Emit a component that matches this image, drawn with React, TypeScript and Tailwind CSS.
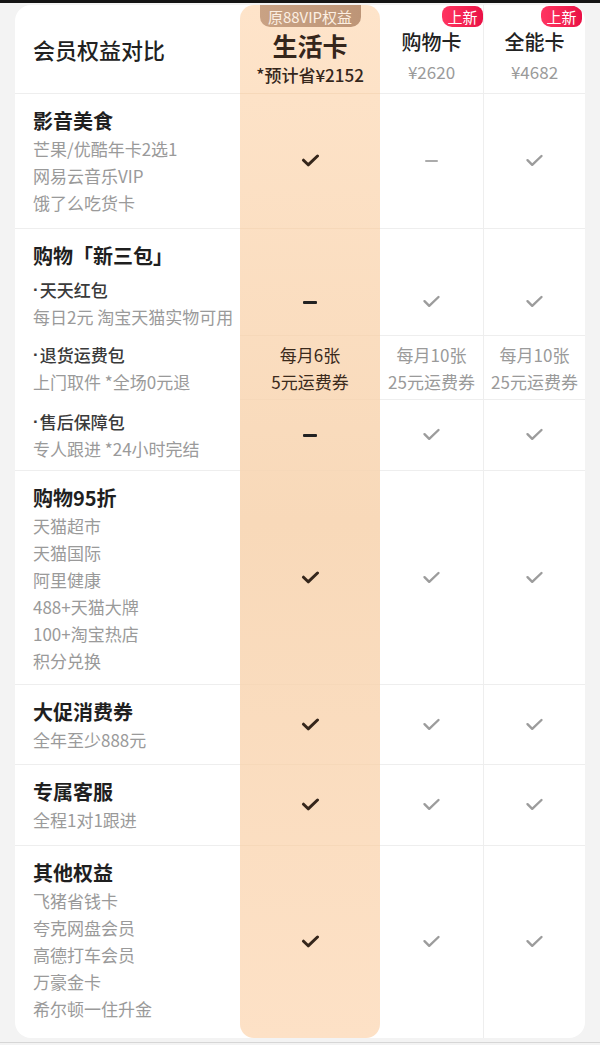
import React from "react";

type V = "check" | "dash" | "empty" | "text";

type Row = {
  h: string;
  left: React.ReactNode;
  leftBorder: boolean;
  valBorder: boolean;
  vals: { kind: V; lines?: string[] }[];
};

const FONT = {
  fontFamily:
    '"Noto Sans CJK SC", "Noto Sans", "Liberation Sans", sans-serif',
};

function Check({ dark }: { dark?: boolean }) {
  return (
    <svg width="19" height="14" viewBox="0 0 19 14" fill="none">
      <path
        d="M2.5 6.2 L7.2 10.8 L16.5 2"
        stroke={dark ? "#35261b" : "#9c9c9c"}
        strokeWidth={dark ? 3 : 2.4}
        strokeLinecap="round"
        strokeLinejoin="round"
      />
    </svg>
  );
}

function Dash({ dark }: { dark?: boolean }) {
  return dark ? (
    <div className="h-[3px] w-[14px] rounded-[1px] bg-[#222]" />
  ) : (
    <div className="h-[2px] w-[13px] rounded-[1px] bg-[#ababab]" />
  );
}

function Block({ title, subs }: { title: string; subs: string[] }) {
  return (
    <div className="flex flex-col pl-[18px] pt-[13px]">
      <div className="text-[20px] font-bold leading-[28px] text-[#1f1f1f]">{title}</div>
      {subs.map((s) => (
        <div key={s} className="text-[17px] leading-[27px] text-[#9a9a9a]">
          {s}
        </div>
      ))}
    </div>
  );
}

function Sub({ name, desc }: { name: string; desc: string }) {
  return (
    <div className="flex h-full flex-col justify-center pl-[18px]">
      <div className="flex items-center text-[17px] font-medium leading-[27px] text-[#3a3a3a]">
        <span className="mr-[1px] font-['Liberation_Sans'] font-bold">·</span>
        {name}
      </div>
      <div className="text-[17px] leading-[27px] text-[#9a9a9a]">{desc}</div>
    </div>
  );
}

const ck = { kind: "check" as V };
const dash = { kind: "dash" as V };
const empty = { kind: "empty" as V };

const rows: Row[] = [
  {
    h: "h-[135px]",
    left: <Block title="影音美食" subs={["芒果/优酷年卡2选1", "网易云音乐VIP", "饿了么吃货卡"]} />,
    leftBorder: true,
    valBorder: true,
    vals: [ck, dash, ck],
  },
  {
    h: "h-[40px]",
    left: (
      <div className="pl-[18px] pt-[13px] text-[20px] font-bold leading-[28px] text-[#1f1f1f]">
        购物「新三包」
      </div>
    ),
    leftBorder: false,
    valBorder: false,
    vals: [empty, empty, empty],
  },
  {
    h: "h-[67px]",
    left: <Sub name="天天红包" desc="每日2元 淘宝天猫实物可用" />,
    leftBorder: false,
    valBorder: true,
    vals: [dash, ck, ck],
  },
  {
    h: "h-[64px]",
    left: <Sub name="退货运费包" desc="上门取件 *全场0元退" />,
    leftBorder: false,
    valBorder: true,
    vals: [
      { kind: "text", lines: ["每月6张", "5元运费券"] },
      { kind: "text", lines: ["每月10张", "25元运费券"] },
      { kind: "text", lines: ["每月10张", "25元运费券"] },
    ],
  },
  {
    h: "h-[71px]",
    left: <Sub name="售后保障包" desc="专人跟进 *24小时完结" />,
    leftBorder: true,
    valBorder: true,
    vals: [dash, ck, ck],
  },
  {
    h: "h-[214px]",
    left: (
      <Block
        title="购物95折"
        subs={["天猫超市", "天猫国际", "阿里健康", "488+天猫大牌", "100+淘宝热店", "积分兑换"]}
      />
    ),
    leftBorder: true,
    valBorder: true,
    vals: [ck, ck, ck],
  },
  {
    h: "h-[80px]",
    left: <Block title="大促消费券" subs={["全年至少888元"]} />,
    leftBorder: true,
    valBorder: true,
    vals: [ck, ck, ck],
  },
  {
    h: "h-[81px]",
    left: <Block title="专属客服" subs={["全程1对1跟进"]} />,
    leftBorder: true,
    valBorder: true,
    vals: [ck, ck, ck],
  },
  {
    h: "h-[192px]",
    left: (
      <Block
        title="其他权益"
        subs={["飞猪省钱卡", "夸克网盘会员", "高德打车会员", "万豪金卡", "希尔顿一住升金"]}
      />
    ),
    leftBorder: false,
    valBorder: false,
    vals: [ck, ck, ck],
  },
];

function ValueCell({ v, hi }: { v: { kind: V; lines?: string[] }; hi: boolean }) {
  if (v.kind === "check") return <Check dark={hi} />;
  if (v.kind === "dash") return <Dash dark={hi} />;
  if (v.kind === "text")
    return (
      <div
        className={
          "flex flex-col items-center text-[17px] leading-[27px] " +
          (hi ? "text-[#3b2a1c]" : "text-[#9a9a9a]")
        }
      >
        {v.lines!.map((l) => (
          <div key={l}>{l}</div>
        ))}
      </div>
    );
  return null;
}

function NewBadge({ pos }: { pos: string }) {
  return (
    <div
      className={
        "absolute top-[1px] flex h-[21px] w-[41px] items-center justify-center rounded-[8px] rounded-bl-[10px] bg-gradient-to-r from-[#ff3461] to-[#ea0f45] text-[15px] leading-none text-white " +
        pos
      }
    >
      上新
    </div>
  );
}

export default function App() {
  return (
    <div className="flex h-[1045px] w-[600px] flex-col overflow-hidden bg-[#f3f3f3]" style={FONT}>
      <div className="h-[3px] bg-[#141414]" />
      <div className="mx-[15px] mt-[2px] flex h-[1033px] overflow-hidden rounded-[16px] bg-white">
        {/* Left column */}
        <div className="flex w-[225px] flex-col">
          <div className="flex h-[89px] items-center border-b border-[#eeeeee] pl-[18px] text-[22px] font-medium text-[#222]">
            会员权益对比
          </div>
          {rows.map((r, i) => (
            <div
              key={i}
              className={r.h + " " + (r.leftBorder ? "border-b border-[#eeeeee]" : "")}
            >
              {r.left}
            </div>
          ))}
        </div>

        {/* Highlight column */}
        <div className="flex w-[140px] flex-col overflow-hidden rounded-[14px] bg-gradient-to-b from-[#fee4ca] via-[#f8d9b9] to-[#fde1c6]">
          <div className="flex h-[89px] flex-col items-center border-b border-[#f6d8b9]">
            <div className="flex h-[22px] w-[101px] shrink-0 items-center justify-center rounded-b-[10px] bg-gradient-to-r from-[#c9a284] to-[#bd9577] text-[15px] leading-none text-[#fcefe2]">
              原88VIP权益
            </div>
            <div className="text-[25px] font-bold leading-[36px] text-[#35261b]">生活卡</div>
            <div className="text-[17px] font-medium leading-[24px] text-[#35261b]">*预计省¥2152</div>
          </div>
          {rows.map((r, i) => (
            <div
              key={i}
              className={
                r.h +
                " flex items-center justify-center " +
                (r.valBorder ? "border-b border-[#f6d8b9]" : "")
              }
            >
              <ValueCell v={r.vals[0]} hi />
            </div>
          ))}
        </div>

        {/* 购物卡 */}
        <div className="flex w-[103px] flex-col">
          <div className="relative flex h-[89px] flex-col items-center border-b border-[#eeeeee] pt-[23px]">
            <NewBadge pos="right-0" />
            <div className="text-[20px] font-medium leading-[28px] text-[#222]">购物卡</div>
            <div className="mt-[5px] text-[17px] leading-[22px] text-[#9a9a9a]">¥2620</div>
          </div>
          {rows.map((r, i) => (
            <div
              key={i}
              className={
                r.h +
                " flex items-center justify-center " +
                (r.valBorder ? "border-b border-[#eeeeee]" : "")
              }
            >
              <ValueCell v={r.vals[1]} hi={false} />
            </div>
          ))}
        </div>

        {/* 全能卡 */}
        <div className="flex flex-1 flex-col border-l border-[#eeeeee]">
          <div className="relative flex h-[89px] flex-col items-center border-b border-[#eeeeee] pt-[23px]">
            <NewBadge pos="right-[3px]" />
            <div className="text-[20px] font-medium leading-[28px] text-[#222]">全能卡</div>
            <div className="mt-[5px] text-[17px] leading-[22px] text-[#9a9a9a]">¥4682</div>
          </div>
          {rows.map((r, i) => (
            <div
              key={i}
              className={
                r.h +
                " flex items-center justify-center " +
                (r.valBorder ? "border-b border-[#eeeeee]" : "")
              }
            >
              <ValueCell v={r.vals[2]} hi={false} />
            </div>
          ))}
        </div>
      </div>
      <div className="mt-[4px] h-px bg-[#d6d6d6]" />
    </div>
  );
}
